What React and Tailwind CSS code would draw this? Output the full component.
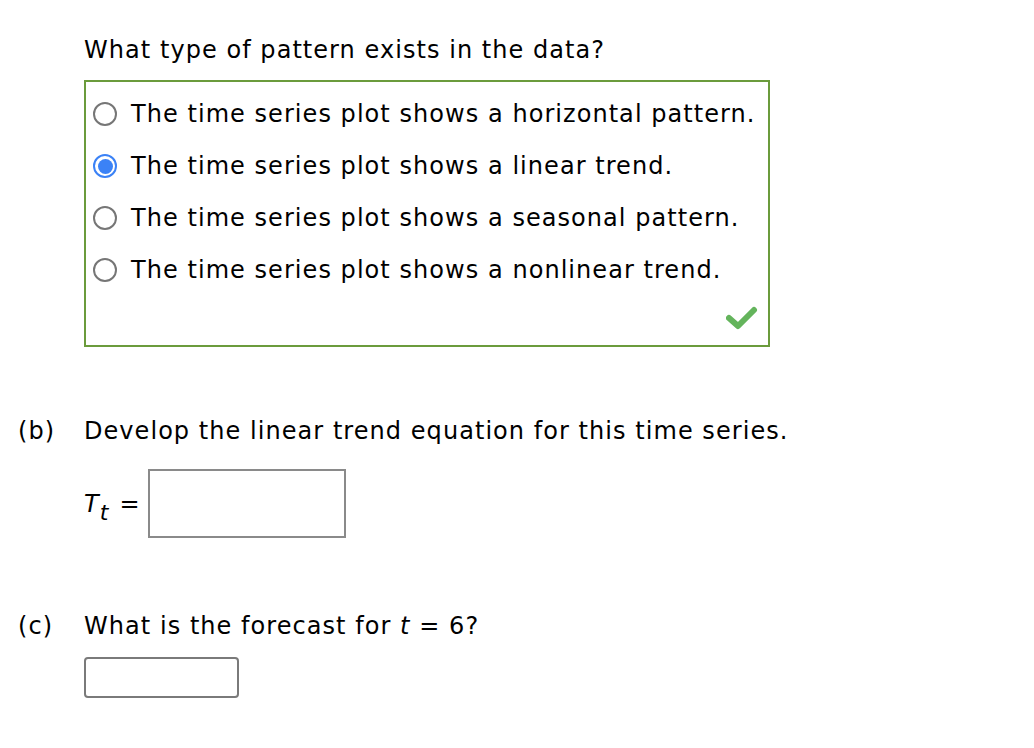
import React from "react";

const options = [
    "The time series plot shows a horizontal pattern.",
    "The time series plot shows a linear trend.",
    "The time series plot shows a seasonal pattern.",
    "The time series plot shows a nonlinear trend.",
];

const Radio = ({ checked }) =>
    checked ? (
        <span className="w-[24px] h-[24px] rounded-full border-2 border-[#3b82f6] flex items-center justify-center shrink-0">
            <span className="w-[15px] h-[15px] rounded-full bg-[#3b82f6]" />
        </span>
    ) : (
        <span className="w-[24px] h-[24px] rounded-full border-2 border-[#767676] bg-white shrink-0" />
    );

const Check = () => (
    <svg width="32" height="26" viewBox="0 0 32 26">
        <path d="M3 13 L12 21 L28 5" fill="none" stroke="#64b45c" strokeWidth="6" strokeLinecap="round" strokeLinejoin="round" />
    </svg>
);

export default function App() {
    return (
        <div className="min-h-screen bg-white text-black text-[24px] leading-none tracking-[1.05px]" style={{ fontFamily: "'DejaVu Sans', Verdana, sans-serif" }}>
            <div className="pl-[84px] pt-[38px]">
                <p>What type of pattern exists in the data?</p>
                <div className="mt-[18px] w-[686px] h-[267px] border-2 border-[#6b9b3c] flex flex-col pl-[7px] pt-[15px] relative">
                    {options.map((o, i) => (
                        <div key={i} className="flex items-center gap-[14px] h-[52px] pb-[18px]">
                            <Radio checked={i === 1} />
                            <span>{o}</span>
                        </div>
                    ))}
                    <div className="absolute right-[10px] bottom-[14px]">
                        <Check />
                    </div>
                </div>
            </div>

            <div className="flex mt-[72px] pl-[18px]">
                <span className="w-[66px]">(b)</span>
                <span>Develop the linear trend equation for this time series.</span>
            </div>
            <div className="flex items-center pl-[84px] mt-[26px]">
                <span className="italic">T<sub className="text-[22px] relative top-[8px]">t</sub></span>
                <span className="ml-[10px]">=</span>
                <div className="ml-[7px] w-[198px] h-[69px] border-2 border-[#8a8a8a]" />
            </div>

            <div className="flex mt-[76px] pl-[18px]">
                <span className="w-[66px]">(c)</span>
                <span>What is the forecast for <span className="italic">t</span> = 6?</span>
            </div>
            <div className="pl-[84px] mt-[19px]">
                <div className="w-[155px] h-[41px] border-2 border-[#7a7a7a] rounded-[4px]" />
            </div>
        </div>
    );
}
